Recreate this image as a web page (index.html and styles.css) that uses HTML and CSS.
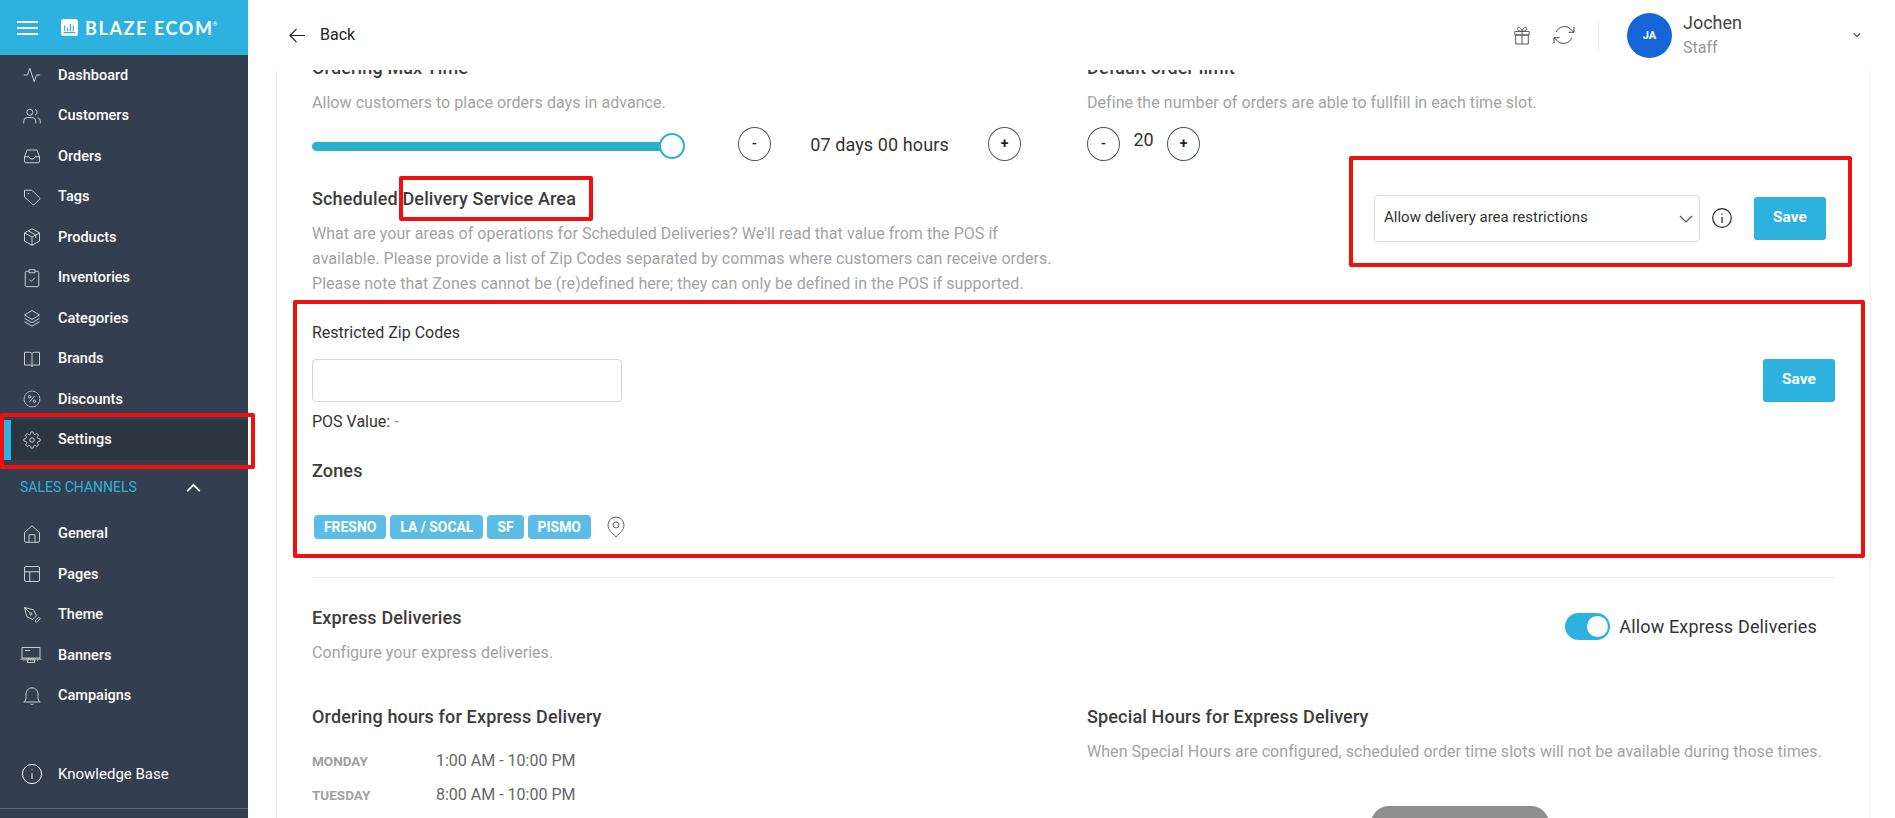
FILE: index.html
```html
<!DOCTYPE html>
<html lang="en">
<head>
    <meta charset="UTF-8">
    <meta name="viewport" content="width=device-width, initial-scale=1.0">
    <title>Blaze Ecom - Settings</title>
    <link rel="stylesheet" href="styles.css">
</head>
<body>
<div class="app">
    <aside class="sidebar">
        <div class="brand">
            <div class="burger"><span></span><span></span><span></span></div>
            <svg class="logo-mark" viewBox="0 0 18 18"><rect width="18" height="18" rx="3" fill="#fff"/><path d="M4 7v6M7 9v4M10 5v8M13 7v6M3 14.5h12" stroke="#2db2df" stroke-width="1.3" fill="none"/></svg>
            <span class="logo-text">BLAZE ECOM</span><span class="logo-reg">®</span>
        </div>
        <ul class="nav">
            <li><svg class="ico" viewBox="0 0 24 24"><path d="M1 12h5l3-9 6 18 3-9h5"/></svg>Dashboard</li>
            <li><svg class="ico" viewBox="0 0 24 24"><circle cx="9" cy="7" r="4"/><path d="M1 22v-3a5 5 0 0 1 5-5h6a5 5 0 0 1 5 5v3M16 3.2a4 4 0 0 1 0 7.6M23 22v-3a5 5 0 0 0-3.5-4.8"/></svg>Customers</li>
            <li><svg class="ico" viewBox="0 0 24 24"><path d="M2 13h6l2 3h4l2-3h6M5.5 4h13L22 13v6a2 2 0 0 1-2 2H4a2 2 0 0 1-2-2v-6z"/></svg>Orders</li>
            <li><svg class="ico" viewBox="0 0 24 24"><path d="M2 3h10l10 10a1.5 1.5 0 0 1 0 2l-7 7a1.5 1.5 0 0 1-2 0L2 12z"/><circle cx="7" cy="7.5" r=".5"/></svg>Tags</li>
            <li><svg class="ico" viewBox="0 0 24 24"><path d="M12 1l10 5.500v11L12 23 2 17.500v-11zM2 6.500L12 12l10-5.500M12 12v11M7 3.800l10 5.500v4"/></svg>Products</li>
            <li><svg class="ico" viewBox="0 0 24 24"><path d="M8 3H5a2 2 0 0 0-2 2v17a1.500 1.500 0 0 0 1.500 1.500h15A1.500 1.500 0 0 0 21 22V5a2 2 0 0 0-2-2h-3M8 1h8v4H8zM8.500 14l2.500 2.500 5-5"/></svg>Inventories</li>
            <li><svg class="ico" viewBox="0 0 24 24"><path d="M12 2L2 8l10 6 10-6zM2 12.500l10 6 10-6M2 17l10 6 10-6"/></svg>Categories</li>
            <li><svg class="ico" viewBox="0 0 24 24"><path d="M12 5a3 3 0 0 0-3-2H2v17h8a2 2 0 0 1 2 2 2 2 0 0 1 2-2h8V3h-7a3 3 0 0 0-3 2zM12 5v17"/></svg>Brands</li>
            <li><svg class="ico" viewBox="0 0 24 24"><circle cx="12" cy="12" r="10.500" stroke-dasharray="3 .6"/><path d="M15.500 8l-7 8"/><circle cx="8.800" cy="9" r="1.600"/><circle cx="15.200" cy="15" r="1.600"/></svg>Discounts</li>
            <li class="active"><svg class="ico" viewBox="0 0 24 24"><circle cx="12" cy="12" r="3"/><path d="M19.400 15a1.650 1.650 0 0 0 .33 1.820l.06.06a2 2 0 1 1-2.830 2.830l-.06-.06a1.650 1.650 0 0 0-2.800 1.170V21a2 2 0 0 1-4 0v-.09A1.650 1.650 0 0 0 7.300 19.740l-.06.06a2 2 0 1 1-2.830-2.830l.06-.06A1.650 1.650 0 0 0 3.300 14H3a2 2 0 0 1 0-4h.09A1.650 1.650 0 0 0 4.260 7.300l-.06-.06a2 2 0 1 1 2.830-2.830l.06.06A1.650 1.650 0 0 0 10 3.300V3a2 2 0 0 1 4 0v.09a1.650 1.650 0 0 0 2.800 1.170l.06-.06a2 2 0 1 1 2.830 2.830l-.06.06A1.650 1.650 0 0 0 20.700 10H21a2 2 0 0 1 0 4h-.09a1.650 1.650 0 0 0-1.510 1z"/></svg>Settings</li>
        </ul>
        <div class="channels">
            <span>SALES CHANNELS</span>
            <svg class="channels-arrow" viewBox="0 0 16 10"><path d="M1 9l7-7 7 7"/></svg>
        </div>
        <ul class="nav">
            <li><svg class="ico" viewBox="0 0 24 24"><path d="M2 10L12 1l10 9v11a2 2 0 0 1-2 2H4a2 2 0 0 1-2-2zM8 23V13h8v10"/></svg>General</li>
            <li><svg class="ico" viewBox="0 0 24 24"><rect x="2" y="2" width="20" height="20" rx="2"/><path d="M2 9h20M9 9v13"/></svg>Pages</li>
            <li><svg class="ico" viewBox="0 0 24 24"><path d="M2 2l12 3 4 8-5 5-8-4zM2 2l7 7M16 20l5-5 2 2-5 5z"/><circle cx="10.500" cy="10.500" r="1.500"/></svg>Theme</li>
            <li><svg class="ico ico-wide" viewBox="0 0 28 24"><path d="M2 2h24v14H2zM0 17.500h28M9 22h10l-1-4.500h-8zM6 6h7"/><path d="M4 19.500h20" stroke-dasharray="1 2"/></svg>Banners</li>
            <li><svg class="ico" viewBox="0 0 24 24"><path d="M1 20c2-1 3-3 3-6V9a8 8 0 0 1 16 0v5c0 3 1 5 3 6zM10 23h4"/></svg>Campaigns</li>
        </ul>
        <div class="nav-bottom">
            <div class="help"><svg class="ico" viewBox="0 0 24 24"><circle cx="12" cy="12" r="11.500"/><path d="M12 11v7M12 6.500v1"/></svg>Knowledge Base</div>
            <div class="sidebar-foot"></div>
        </div>
    </aside>

    <main class="main">
        <header class="topbar">
            <div class="back">
                <svg class="back-arrow" viewBox="0 0 18 16"><path d="M17 8H1M8 1L1 8l7 7"/></svg>
                <span>Back</span>
            </div>
            <div class="top-right">
                <svg class="top-ico" viewBox="0 0 20 22"><path d="M2 7h16v4H2zM3 11h14v10H3zM10 7v14M10 7C7 7 5 6 5 4s3-3 5 3zM10 7c3 0 5-1 5-3s-3-3-5 3z"/></svg>
                <svg class="top-ico refresh" viewBox="0 0 24 22"><path d="M23 2v6h-6M1 20v-6h6M3.500 8a9.500 9.500 0 0 1 15.700-3.500L23 8M1 14l3.800 3.500A9.500 9.500 0 0 0 20.500 14"/></svg>
                <div class="top-sep"></div>
                <div class="avatar">JA</div>
                <div class="user">
                    <div class="user-name">Jochen</div>
                    <div class="user-role">Staff</div>
                </div>
                <svg class="user-arrow" viewBox="0 0 10 6"><path d="M1 1l4 4 4-4"/></svg>
            </div>
        </header>

        <div class="scroller">
            <div class="card">
                <div class="two-col first-block">
                    <div>
                        <h3 class="title">Ordering Max Time</h3>
                        <p class="desc desc-top">Allow customers to place orders days in advance.</p>
                        <div class="stepper-row">
                            <div class="slider"><div class="slider-track"></div><div class="slider-thumb"></div></div>
                            <button class="round">-</button>
                            <div class="days">07 days 00 hours</div>
                            <button class="round plus">+</button>
                        </div>
                    </div>
                    <div>
                        <h3 class="title">Default order limit</h3>
                        <p class="desc desc-top">Define the number of orders are able to fullfill in each time slot.</p>
                        <div class="stepper-row">
                            <button class="round">-</button>
                            <div class="limit">20</div>
                            <button class="round plus">+</button>
                        </div>
                    </div>
                </div>

                <div class="area-row">
                    <div class="area-text">
                        <h3 class="title">Scheduled Delivery Service Area</h3>
                        <p class="desc desc-long">What are your areas of operations for Scheduled Deliveries? We'll read that value from the POS if<br>available. Please provide a list of Zip Codes separated by commas where customers can receive orders.<br>Please note that Zones cannot be (re)defined here; they can only be defined in the POS if supported.</p>
                    </div>
                    <div class="area-controls">
                        <div class="select">
                            <span>Allow delivery area restrictions</span>
                            <svg class="select-arrow" viewBox="0 0 14 8"><path d="M1 1l6 6 6-6"/></svg>
                        </div>
                        <svg class="info" viewBox="0 0 20 20"><circle cx="10" cy="10" r="9.300"/><path d="M10 9v6M10 5.500v1.200"/></svg>
                        <button class="save save-area">Save</button>
                    </div>
                </div>

                <div class="zip-row">
                    <div>
                        <div class="label">Restricted Zip Codes</div>
                        <div class="text-input"></div>
                        <div class="label pos">POS Value: <span class="muted">-</span></div>
                    </div>
                    <button class="save save-zip">Save</button>
                </div>

                <h3 class="title zones-title">Zones</h3>
                <div class="chips">
                    <span class="chip">FRESNO</span>
                    <span class="chip">LA / SOCAL</span>
                    <span class="chip">SF</span>
                    <span class="chip">PISMO</span>
                    <svg class="pin" viewBox="0 0 18 22"><path d="M9 21C5 17 1 14 1 9a8 8 0 0 1 16 0c0 5-4 8-8 12z"/><circle cx="9" cy="9" r="3"/></svg>
                </div>

                <div class="divider"></div>

                <div class="express-row">
                    <div>
                        <h3 class="title">Express Deliveries</h3>
                        <p class="desc">Configure your express deliveries.</p>
                    </div>
                    <div class="express-toggle">
                        <div class="toggle"><div class="toggle-knob"></div></div>
                        <span>Allow Express Deliveries</span>
                    </div>
                </div>

                <div class="two-col hours-block">
                    <div>
                        <h3 class="title">Ordering hours for Express Delivery</h3>
                        <div class="hours">
                            <div class="hours-row"><span class="day">MONDAY</span><span class="time">1:00 AM - 10:00 PM</span></div>
                            <div class="hours-row"><span class="day">TUESDAY</span><span class="time">8:00 AM - 10:00 PM</span></div>
                        </div>
                    </div>
                    <div>
                        <h3 class="title">Special Hours for Express Delivery</h3>
                        <p class="desc">When Special Hours are configured, scheduled order time slots will not be available during those times.</p>
                        <div class="grey-btn"></div>
                    </div>
                </div>
            </div>
        </div>
    </main>

    <!-- red boxes drawn over the screenshot -->
    <div class="mark mark-settings"></div>
    <div class="mark mark-title"></div>
    <div class="mark mark-select"></div>
    <div class="mark mark-zones"></div>
</div>
</body>
</html>
```

FILE: styles.css
```css
* {
    margin: 0;
    padding: 0;
    box-sizing: border-box;
}
html, body {
    height: 100%;
    overflow: hidden;
}
body {
    font-family: Roboto, "Liberation Sans", sans-serif;
    font-size: 14px;
    color: #333;
    background: #fff;
}
ul {
    list-style: none;
}
button {
    font-family: inherit;
}
.app {
    position: relative;
    display: flex;
    width: 100%;
    height: 818px;
    overflow: hidden;
}

/* sidebar */
.sidebar {
    display: flex;
    flex-direction: column;
    flex: none;
    width: 248px;
    height: 100%;
    background: #333f4f;
    color: #fff;
}
.brand {
    display: flex;
    align-items: center;
    flex: none;
    height: 55px;
    padding-left: 17px;
    background: #2db2df;
}
.burger {
    display: flex;
    flex-direction: column;
    justify-content: space-between;
    width: 21px;
    height: 14px;
    margin-right: 23px;
}
.burger span {
    display: block;
    height: 2px;
    background: #fff;
}
.logo-mark {
    width: 17px;
    height: 17px;
    margin-right: 7px;
}
.logo-text {
    font-family: Lato, Roboto, sans-serif;
    font-size: 18px;
    font-weight: 700;
    letter-spacing: 1.6px;
    white-space: nowrap;
}
.logo-reg {
    font-size: 6px;
    margin: -8px 0 0 -1px;
}
.nav li, .help {
    display: flex;
    align-items: center;
    height: 40.5px;
    padding-left: 23px;
    font-size: 14.5px;
    font-weight: 500;
    white-space: nowrap;
}
.nav li.active {
    height: 40px;
    margin-left: 3px;
    padding-left: 12px;
    border-left: 8px solid #2db2df;
    background: #2c3640;
}
.ico {
    flex: none;
    width: 18px;
    height: 18px;
    margin-right: 17px;
    overflow: visible;
    fill: none;
    stroke: #d8dce0;
    stroke-width: 1.2;
}
.ico-wide {
    width: 22px;
    margin-left: -3px;
    margin-right: 16px;
}
.channels {
    display: flex;
    align-items: center;
    justify-content: space-between;
    height: 30px;
    margin: 12.600px 0 11.400px;
    padding: 0 47px 0 20px;
    color: #2db2df;
    font-size: 14px;
}
.channels-arrow {
    width: 15px;
    height: 9px;
    fill: none;
    stroke: #fff;
    stroke-width: 2;
}
.nav-bottom {
    margin-top: auto;
}
.help {
    font-size: 15px;
    font-weight: 400;
    margin-bottom: 14px;
}
.help .ico {
    width: 20px;
    height: 20px;
    margin-left: -1px;
    margin-right: 16px;
    stroke: #fff;
}
.sidebar-foot {
    height: 10px;
    border-top: 1px solid #5c6673;
}

/* top bar */
.main {
    display: flex;
    flex-direction: column;
    flex: 1;
    min-width: 0;
}
.topbar {
    display: flex;
    align-items: center;
    justify-content: space-between;
    flex: none;
    height: 70px;
    padding: 0 34px 0 41px;
    background: #fff;
}
.back {
    display: flex;
    align-items: center;
    color: #222;
    font-size: 16px;
}
.back span {
    margin-top: -2px;
}
.back-arrow {
    width: 17px;
    height: 15px;
    margin-right: 14px;
    fill: none;
    stroke: #222;
    stroke-width: 1.3;
}
.top-right {
    display: flex;
    align-items: center;
}
.top-ico {
    width: 18px;
    height: 20px;
    fill: none;
    stroke: #555;
    stroke-width: 1.1;
}
.refresh {
    width: 22px;
    margin-left: 22px;
    stroke: #444;
}
.top-sep {
    width: 1px;
    height: 28px;
    margin: 0 28px 0 23px;
    background: #e8e8e8;
}
.avatar {
    display: flex;
    align-items: center;
    justify-content: center;
    width: 45px;
    height: 45px;
    border-radius: 50%;
    background: #1565d8;
    color: #fff;
    font-size: 11px;
    font-weight: 700;
}
.user {
    width: 170px;
    margin-left: 11px;
}
.user-name {
    font-size: 18px;
    line-height: 24px;
    color: #444;
}
.user-role {
    margin-top: 1px;
    font-size: 16px;
    line-height: 24px;
    color: #999;
}
.user-arrow {
    width: 8px;
    height: 6px;
    fill: none;
    stroke: #333;
    stroke-width: 1.3;
}

/* scrolled content */
.scroller {
    flex: 1;
    overflow: hidden;
}
.card {
    width: 1595px;
    height: 800px;
    margin-left: 28px;
    padding: 0 35px;
    border-left: 1px solid #eee;
    border-right: 1px solid #eee;
}
.two-col {
    display: grid;
    grid-template-columns: 775px 1fr;
}
.first-block {
    margin-top: -14px;
}
.title {
    font-size: 18px;
    font-weight: 500;
    line-height: 24px;
    letter-spacing: .15px;
    color: #3c3c3c;
}
.desc {
    margin-top: 10px;
    font-size: 16px;
    line-height: 24px;
    letter-spacing: .05px;
    color: #a3a3a3;
    white-space: nowrap;
}
.desc-top {
    margin-top: 11px;
}
.stepper-row {
    display: flex;
    align-items: center;
    height: 34px;
    margin-top: 12px;
}
.slider {
    position: relative;
    flex: none;
    width: 373px;
    height: 26px;
    margin-top: 4px;
    margin-right: 53px;
}
.slider-track {
    width: 360px;
    height: 9px;
    margin-top: 9px;
    border-radius: 5px;
    background: #29b2ce;
}
.slider-thumb {
    position: absolute;
    top: 0;
    right: 0;
    width: 26px;
    height: 26px;
    border: 2px solid #29b2ce;
    border-radius: 50%;
    background: #fff;
}
.round {
    flex: none;
    width: 33px;
    height: 34px;
    border: 1px solid #555;
    border-radius: 50%;
    background: #fff;
    color: #222;
    font-size: 14px;
    font-weight: 500;
    padding-bottom: 3px;
}
.plus {
    font-weight: 700;
}
.days {
    width: 217px;
    font-size: 18px;
    letter-spacing: .1px;
    text-align: center;
    color: #333;
}
.limit {
    width: 47px;
    padding-bottom: 10px;
    font-size: 18px;
    text-align: center;
    color: #333;
}
.area-row {
    display: flex;
    justify-content: space-between;
    margin-top: 26px;
}
.desc-long {
    line-height: 25px;
}
.area-controls {
    display: flex;
    align-items: flex-start;
    margin-top: 8px;
    padding-right: 9px;
}
.select {
    display: flex;
    align-items: center;
    justify-content: space-between;
    width: 326px;
    height: 47px;
    padding: 0 6px 4px 9px;
    border: 1px solid #ddd;
    border-radius: 4px;
    font-size: 15px;
    color: #333;
}
.select-arrow {
    width: 14px;
    height: 8px;
    margin-top: 4px;
    fill: none;
    stroke: #555;
    stroke-width: 1.2;
}
.info {
    width: 20px;
    height: 20px;
    margin: 13px 22px 0 12px;
    fill: none;
    stroke: #222;
    stroke-width: 1.2;
}
.save {
    border: 0;
    border-radius: 3px;
    background: #2db2df;
    color: #fff;
    font-size: 15.5px;
    font-weight: 700;
    width: 72px;
    height: 43px;
    padding-bottom: 3px;
}
.save-area {
    margin-top: 2px;
}
.zip-row {
    display: flex;
    justify-content: space-between;
    margin-top: 27px;
}
.label {
    font-size: 16px;
    line-height: 20px;
    color: #333;
}
.text-input {
    width: 310px;
    height: 43px;
    margin-top: 16px;
    border: 1px solid #d4d4d4;
    border-radius: 4px;
}
.pos {
    margin-top: 10px;
}
.muted {
    color: #999;
}
.save-zip {
    margin-top: 36px;
}
.zones-title {
    margin-top: 27px;
}
.chips {
    display: flex;
    align-items: center;
    height: 24px;
    margin-top: 32px;
    padding-left: 2px;
}
.chip {
    display: flex;
    align-items: center;
    height: 24px;
    margin-right: 4px;
    padding: 0 10px;
    border-radius: 4px;
    background: #5bbde5;
    color: #fff;
    font-size: 13.9px;
    font-weight: 700;
}
.pin {
    width: 18px;
    height: 22px;
    margin-left: 12px;
    fill: none;
    stroke: #666;
    stroke-width: 1;
}
.divider {
    height: 1px;
    margin-top: 38px;
    background: #eaeaea;
}
.express-row {
    display: flex;
    justify-content: space-between;
    margin-top: 28px;
}
.express-row .desc {
    margin-top: 11px;
}
.express-toggle {
    display: flex;
    align-items: center;
    height: 27px;
    margin-top: 7px;
    padding-right: 18px;
    font-size: 18px;
    letter-spacing: .15px;
    color: #333;
}
.toggle {
    position: relative;
    width: 45px;
    height: 27px;
    margin-right: 9px;
    border-radius: 14px;
    background: #2db2df;
}
.toggle-knob {
    position: absolute;
    top: 3px;
    right: 2px;
    width: 21px;
    height: 21px;
    border-radius: 50%;
    background: #fff;
}
.hours-block {
    margin-top: 40px;
}
.hours {
    margin-top: 21px;
}
.hours-row {
    display: flex;
    align-items: center;
    height: 20px;
    margin-bottom: 14px;
}
.day {
    width: 124px;
    padding-top: 1px;
    font-size: 13.5px;
    font-weight: 700;
    color: #a0a0a0;
}
.time {
    font-size: 16px;
    color: #666;
}
.hours-block .desc {
    margin-top: 11px;
}
.grey-btn {
    width: 178px;
    height: 44px;
    margin: 42px 0 0 284px;
    border-radius: 18px;
    background: #8f8f8f;
}

/* red boxes over the page */
.mark {
    position: absolute;
    border: 4px solid #f01010;
    border-radius: 2px;
}
.mark-settings {
    left: 0;
    top: 413px;
    width: 255px;
    height: 56px;
}
.mark-title {
    left: 399px;
    top: 176px;
    width: 194px;
    height: 45px;
}
.mark-select {
    left: 1349px;
    top: 156px;
    width: 503px;
    height: 111px;
}
.mark-zones {
    left: 293px;
    top: 300px;
    width: 1572px;
    height: 258px;
}
```
